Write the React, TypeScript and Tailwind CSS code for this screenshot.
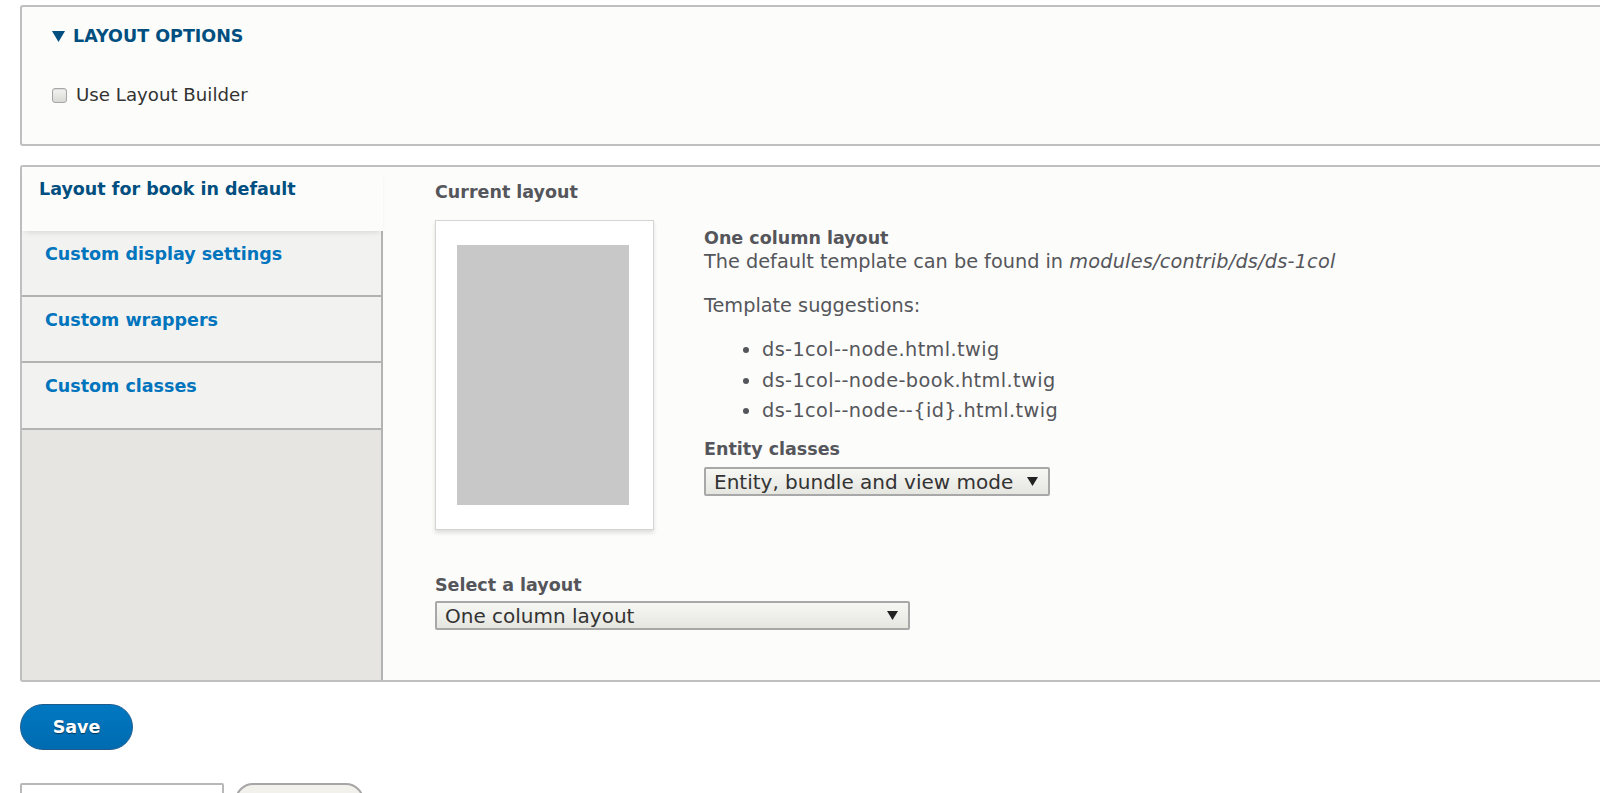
import React from "react";

const font = { fontFamily: '"DejaVu Sans", "Liberation Sans", sans-serif' };

const suggestions = [
  "ds-1col--node.html.twig",
  "ds-1col--node-book.html.twig",
  "ds-1col--node--{id}.html.twig",
];

const tabs = ["Custom display settings", "Custom wrappers", "Custom classes"];

function FakeSelect({ label, width }: { label: string; width: string }) {
  return (
    <div
      className={`${width} h-[29px] flex items-center justify-between pl-[8px] pr-[10px] border-2 border-[#a8a8a8] rounded-[2px] bg-gradient-to-b from-[#f6f6f3] to-[#e6e6e1] text-[20px] text-[#333]`}
    >
      <span className="leading-none">{label}</span>
      <svg width="11" height="9" viewBox="0 0 11 9">
        <polygon points="0,0 11,0 5.5,9" fill="#222" />
      </svg>
    </div>
  );
}

export default function App() {
  return (
    <div className="h-[793px] overflow-hidden bg-white pl-[20px] pt-[5px]" style={font}>
      {/* Layout options details */}
      <div className="h-[141px] border-2 border-r-0 border-[#bfbfbf] rounded-l-[3px] bg-[#fcfcfa] pl-[30px] pt-[17px]">
        <div className="flex items-center gap-[8px] text-[#004f80] font-bold text-[17.5px] leading-[24px] uppercase">
          <svg width="13" height="11" viewBox="0 0 13 11">
            <polygon points="0,0 13,0 6.5,11" fill="#004f80" />
          </svg>
          <span>Layout options</span>
        </div>
        <label className="mt-[35px] flex items-center gap-[9px] text-[18.2px] leading-[24px] text-[#333]">
          <span className="w-[15px] h-[15px] rounded-[3px] border border-[#a6a6a6] bg-gradient-to-b from-[#f4f4f2] to-[#d8d8d4] shadow-[inset_0_1px_1px_rgba(0,0,0,0.1)]" />
          <span>Use Layout Builder</span>
        </label>
      </div>

      {/* Vertical tabs */}
      <div className="mt-[19px] h-[517px] flex border-2 border-r-0 border-[#bfbfbf] rounded-l-[3px] bg-[#fcfcfa]">
        <div className="w-[361px] flex flex-col">
          <div className="h-[64px] bg-[#fcfcfa] pl-[17px] pt-[10px] text-[17.5px] leading-[24px] font-bold text-[#004f80] relative z-10 shadow-[0_4px_6px_-3px_rgba(0,0,0,0.12)]">
            Layout for book in default
          </div>
          <div className="flex-1 flex flex-col bg-[#e6e5e1] border-r-2 border-[#b3b3b3]">
            {tabs.map((t, i) => (
              <div
                key={t}
                className={`${i === 2 ? "h-[67px]" : "h-[66px]"} bg-[#f2f2f0] border-b-2 border-[#b3b3b3] pl-[23px] pt-[11px] text-[17.5px] leading-[24px] font-bold text-[#0074bd]`}
              >
                {t}
              </div>
            ))}
          </div>
        </div>

        <div className="flex-1 pl-[52px] pt-[13px] text-[#55565b]">
          <div className="text-[17.5px] leading-[24px] font-bold">Current layout</div>
          <div className="mt-[16px] flex">
            <div className="w-[219px] h-[310px] shrink-0 bg-white border border-[#d4d4d4] shadow-[0_3px_4px_rgba(0,0,0,0.12)] pt-[24px] pl-[21px]">
              <div className="w-[172px] h-[260px] bg-[#c8c8c8]" />
            </div>
            <div className="ml-[50px] pt-[6px]">
              <div className="font-bold text-[17.5px] leading-[24px]">One column layout</div>
              <div className="text-[19.3px] leading-[24px]">
                The default template can be found in <em className="tracking-[0.2px]">modules/contrib/ds/ds-1col</em>
              </div>
              <div className="mt-[20px] text-[19.3px] leading-[24px]">Template suggestions:</div>
              <ul className="mt-[20px] ml-[58px] list-disc text-[19.3px] tracking-[0.4px] leading-[24px] flex flex-col gap-[6.5px]">
                {suggestions.map((s) => (
                  <li key={s}>{s}</li>
                ))}
              </ul>
              <div className="mt-[14px] font-bold text-[17.5px] leading-[24px]">Entity classes</div>
              <div className="mt-[6px]">
                <FakeSelect label="Entity, bundle and view mode" width="w-[346px]" />
              </div>
            </div>
          </div>
          <div className="mt-[43px] text-[17.5px] font-bold leading-[24px]">Select a layout</div>
          <div className="mt-[4px]">
            <FakeSelect label="One column layout" width="w-[475px]" />
          </div>
        </div>
      </div>

      {/* Actions */}
      <button className="mt-[22px] w-[113px] h-[46px] rounded-full bg-gradient-to-b from-[#0078c2] to-[#006bb0] border border-[#1e5c90] text-white font-bold text-[17.5px] [text-shadow:0_1px_1px_rgba(0,0,0,0.5)]">
        Save
      </button>

      <div className="mt-[33px] flex gap-[11px]">
        <div className="w-[204px] h-[36px] bg-white border-2 border-[#b8b8b8] rounded-[2px]" />
        <div className="w-[129px] h-[36px] bg-[#f2f1eb] border-2 border-[#a6a6a6] rounded-full" />
      </div>
    </div>
  );
}
